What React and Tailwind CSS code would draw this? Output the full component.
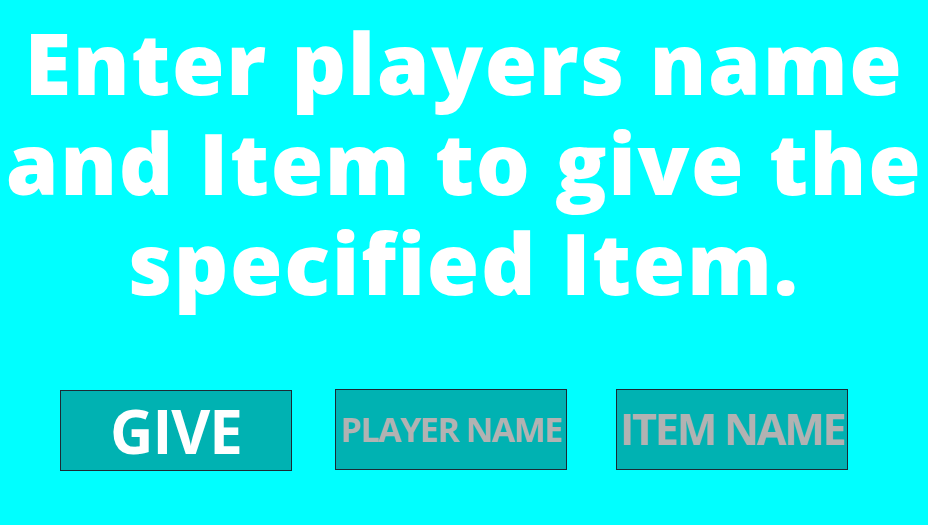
import React from "react";

const boxClass =
  "flex items-center justify-center w-[232px] h-[81px] bg-[#00b2b2] border border-[#1b2a35] overflow-hidden whitespace-nowrap";

export default function App() {
  return (
    <div className="w-[928px] h-[525px] bg-[#00ffff] flex flex-col overflow-hidden">
      {/* Title */}
      <h1
        className="pt-[12px] text-center text-white font-extrabold text-[85px] leading-[100px] tracking-[1.6px]"
        style={{ fontFamily: '"Open Sans", sans-serif' }}
      >
        Enter players name
        <br />
        and Item to give the
        <br />
        specified Item.
      </h1>

      {/* Controls */}
      <div
        className="mt-[77px] flex items-start pl-[60px] font-bold"
        style={{ fontFamily: '"Open Sans", sans-serif' }}
      >
        <button className={`${boxClass} mt-[1px] text-white text-[60px] tracking-[-1px]`}>
          GIVE
        </button>
        <div className={`${boxClass} ml-[43px] text-[#b2b2b2] text-[34px] tracking-[-1.5px]`}>
          PLAYER NAME
        </div>
        <div className={`${boxClass} ml-[49px] text-[#b2b2b2] text-[43px] tracking-[-2.2px]`}>
          ITEM NAME
        </div>
      </div>
    </div>
  );
}
